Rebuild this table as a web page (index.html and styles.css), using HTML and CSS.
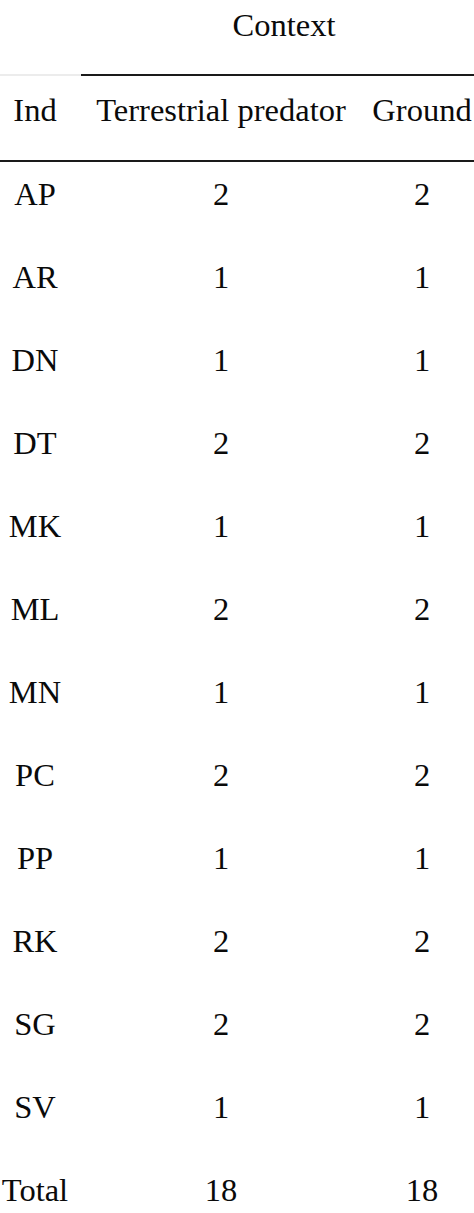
FILE: index.html
```html
<!DOCTYPE html>
<html lang="en">
<head>
<meta charset="utf-8">
<title>Context table</title>
<link rel="stylesheet" href="styles.css">
</head>
<body>
<div class="frame">
<table class="data">
  <colgroup>
    <col class="c-ind">
    <col class="c-terr">
    <col class="c-ground">
  </colgroup>
  <thead>
    <tr class="group-row">
      <th class="blank"></th>
      <th class="group" colspan="2">Context</th>
    </tr>
    <tr class="head-row">
      <th class="ind first">Ind</th>
      <th class="terr">Terrestrial predator</th>
      <th class="ground">Ground</th>
    </tr>
  </thead>
  <tbody>
    <tr><td class="ind">AP</td><td class="terr">2</td><td class="ground">2</td></tr>
    <tr><td class="ind">AR</td><td class="terr">1</td><td class="ground">1</td></tr>
    <tr><td class="ind">DN</td><td class="terr">1</td><td class="ground">1</td></tr>
    <tr><td class="ind">DT</td><td class="terr">2</td><td class="ground">2</td></tr>
    <tr><td class="ind">MK</td><td class="terr">1</td><td class="ground">1</td></tr>
    <tr><td class="ind">ML</td><td class="terr">2</td><td class="ground">2</td></tr>
    <tr><td class="ind">MN</td><td class="terr">1</td><td class="ground">1</td></tr>
    <tr><td class="ind">PC</td><td class="terr">2</td><td class="ground">2</td></tr>
    <tr><td class="ind">PP</td><td class="terr">1</td><td class="ground">1</td></tr>
    <tr><td class="ind">RK</td><td class="terr">2</td><td class="ground">2</td></tr>
    <tr><td class="ind">SG</td><td class="terr">2</td><td class="ground">2</td></tr>
    <tr><td class="ind">SV</td><td class="terr">1</td><td class="ground">1</td></tr>
    <tr><td class="ind">Total</td><td class="terr">18</td><td class="ground">18</td></tr>
  </tbody>
</table>
</div>
</body>
</html>
```

FILE: styles.css
```css
html, body {
  margin: 0;
  padding: 0;
  background: #ffffff;
}

.frame {
  width: 474px;
  height: 1213px;
  overflow: hidden;
}

.data {
  width: 487px;
  table-layout: fixed;
  border-collapse: separate;
  border-spacing: 0;
  font-family: "Liberation Serif", "Times New Roman", serif;
  font-size: 32.5px;
  line-height: 32px;
  color: #0a0a0a;
}

.c-ind { width: 81px; }
.c-terr { width: 280px; }
.c-ground { width: 126px; }

.data th,
.data td {
  font-weight: normal;
  text-align: center;
  white-space: nowrap;
  padding: 0;
}

.group-row th {
  padding-top: 9px;
  padding-bottom: 33px;
}

.head-row th {
  padding-top: 18px;
  padding-bottom: 34px;
  border-top: 2px solid #1a1a1a;
  border-bottom: 2px solid #1a1a1a;
}

.head-row th.first {
  border-top-color: #ececec;
}

.data tbody td {
  padding-top: 16px;
  padding-bottom: 35px;
}

.data .ind {
  padding-right: 11px;
}

.data .ground {
  padding-right: 4px;
}
```
